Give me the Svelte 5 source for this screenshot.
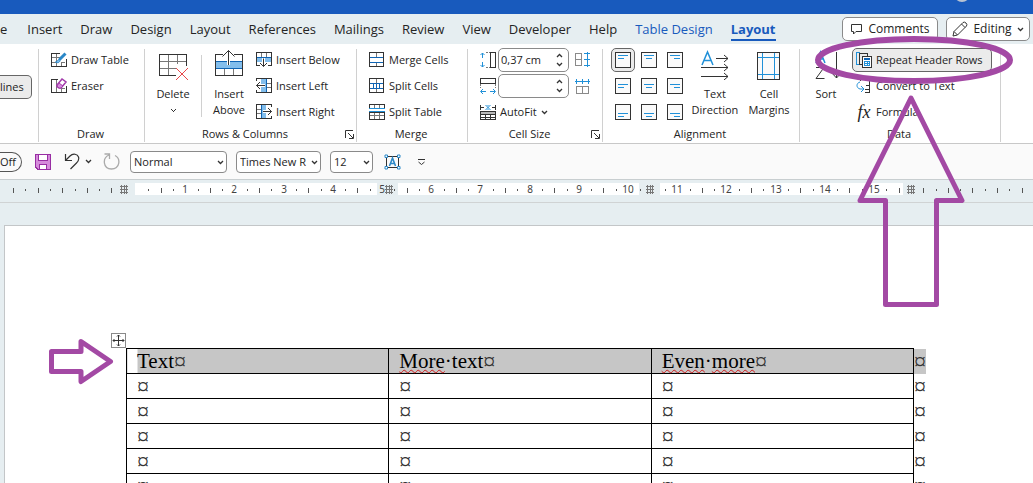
<script lang="ts">
	type Item = { label: string; icon: string };

	const tabs = [
		'Insert', 'Draw', 'Design', 'Layout', 'References', 'Mailings',
		'Review', 'View', 'Developer', 'Help'
	];

	const drawItems: Item[] = [
		{ label: 'Draw Table', icon: 'draw-table' },
		{ label: 'Eraser', icon: 'eraser' }
	];
	const insertItems: Item[] = [
		{ label: 'Insert Below', icon: 'insert-below' },
		{ label: 'Insert Left', icon: 'insert-left' },
		{ label: 'Insert Right', icon: 'insert-right' }
	];
	const mergeItems: Item[] = [
		{ label: 'Merge Cells', icon: 'merge' },
		{ label: 'Split Cells', icon: 'split-cells' },
		{ label: 'Split Table', icon: 'split-table' }
	];

	const vertical = ['top', 'middle', 'bottom'];
	const horizontal = ['left', 'center', 'right'];

	let rowHeight = $state('0,37 cm');
	let colWidth = $state('');
	let align = $state('top-left');
	let repeatHeader = $state(true);

	const headers = [['Text'], ['More', 'text'], ['Even', 'more']];
	const flagged = ['More', 'Even', 'more'];
	const bodyRows = [1, 2, 3, 4, 5];

	// ruler: four marks per centimetre, column markers replace some of them
	const ZERO = 136;
	const CM = 49.2;
	const stripes = [[135, 242], [398, 241], [660, 243]];
	const markers = [120, 385, 646, 907];
	const skipped = [-1, 0, 42, 63];
	const marks = Array.from({ length: 83 }, (_, i) => i - 10)
		.filter((i) => !skipped.includes(i))
		.map((i) => ({
			x: Math.round(ZERO + (i * CM) / 4),
			label: i > 0 && i <= 60 && i % 4 === 0 ? String(i / 4) : '',
			tall: i % 2 === 0
		}));
</script>

{#snippet chevron()}
	<svg class="chev" width="7" height="5" viewBox="0 0 7 5"><path d="M1 1l2.5 2.5L6 1" /></svg>
{/snippet}

{#snippet launcher()}
	<button class="launcher" aria-label="More options">
		<svg width="9" height="9" viewBox="0 0 9 9"><path d="M.5 8V.5H8M3 3l5 5M8.500 4v4.500H4" /></svg>
	</button>
{/snippet}

{#snippet icon(name: string)}
	<svg class="ico" width="16" height="16" viewBox="0 0 16 16" aria-hidden="true">
		{#if name === 'draw-table'}
			<path class="thin" d="M1 5.500h8M1 10.500h5M5.500 1v13M10.500 10v4M10 10.500h4" />
			<path d="M9 1.500H.5v13h14.500V7" />
			<path d="M14.500 1.500L8.500 7.500" stroke="#2b88c8" stroke-width="3" shape-rendering="auto" />
			<path d="M9 7.500c-2-1-2 2-4.500 2.500 2 1.500 5 .5 4.500-2.500z" fill="#83beec" stroke="#2b88c8" shape-rendering="auto" />
		{:else if name === 'eraser'}
			<path class="thin" d="M5.500 1v13M10.500 10v4M10 10.500h4" />
			<path d="M7 1.500H.5v13h14.500V8" />
			<path d="M6 7l5-6 4 3-5 6H8L6 8.500z" fill="#fff" stroke="#a33cab" stroke-width="1.500" shape-rendering="auto" />
			<path d="M8 5l4 3-2 2H8L6 8z" fill="#d58bdb" stroke="#a33cab" shape-rendering="auto" />
		{:else if name === 'insert-below'}
			<rect x="1" y="5" width="14" height="5" fill="#83beec" stroke="none" />
			<path class="thin" d="M5.500 1v4M10.500 1v4" />
			<path class="blue" d="M1 5.500h14" />
			<path d="M4 13.500H.5V.5h15v13H12" />
			<path d="M7.500 6v9" stroke="#fff" stroke-width="3" />
			<path d="M7.500 6.500v8M4 11l3.500 3.500L11 11" shape-rendering="auto" />
		{:else if name === 'insert-left'}
			<rect x="5" y="1" width="5" height="13" fill="#83beec" stroke="none" />
			<path class="thin" d="M11 5.500h4M11 9.500h4" />
			<path class="blue" d="M10.500 1v13" />
			<path d="M.5 3V.5h15v14H.5V12" />
			<path d="M1 7.500h8" stroke="#fff" stroke-width="3" />
			<path d="M.5 7.500H9M4 4L.5 7.500 4 11" shape-rendering="auto" />
		{:else if name === 'insert-right'}
			<rect x="5" y="1" width="5" height="13" fill="#83beec" stroke="none" />
			<path class="thin" d="M1 5.500h4M1 9.500h4" />
			<path class="blue" d="M5.500 1v13" />
			<path d="M15.500 3V.5H.5v14h15V12" />
			<path d="M7 7.500h8" stroke="#fff" stroke-width="3" />
			<path d="M7 7.500h8.500M12 4l3.500 3.500L12 11" shape-rendering="auto" />
		{:else if name === 'merge'}
			<path class="thin" d="M7.500 1v4M7.500 11v4" />
			<rect x=".5" y=".5" width="14" height="14" />
			<path class="blue" d="M1 5.500h13M1 10.500h13" />
		{:else if name === 'split-cells'}
			<path class="thin" d="M7.500 1v4M7.500 11v4" />
			<rect x=".5" y=".5" width="14" height="14" />
			<path class="blue" d="M1 5.500h13M1 10.500h13M4.500 5v5M7.500 5v5M10.500 5v5" />
		{:else if name === 'split-table'}
			<path class="thin" d="M5.500 1v3M10.500 1v3M5.500 9v6M10.500 9v6M1 11.500h14" />
			<path d="M.5 4V.5h15V4M.5 8.500h15v7H.5z" />
			<path class="blue light" d="M0 4.500h16M0 7.500h16" />
		{:else if name === 'row-height'}
			<path d="M10.500.5h5v15h-5z" />
			<path class="thin" stroke-dasharray="2 1" d="M6 .5h4M6 15.500h4" />
			<path class="blue light" shape-rendering="auto" d="M2.500 1v5M2.500 10v5M.5 3l2-2 2 2M.5 13l2 2 2-2" />
		{:else if name === 'col-width'}
			<path d="M.5.5h15v5H.5z" />
			<path class="thin" stroke-dasharray="2 1" d="M.5 6v4M15.500 6v4" />
			<path class="blue light" shape-rendering="auto" d="M1 13.500h5M10 13.500h5M3 11l-2.500 2.500L3 16M13 11l2.500 2.500L13 16" />
		{:else if name === 'dist-rows'}
			<path class="grey" d="M.5 1.500h6v12h-6zM0 7.500h7" />
			<path class="blue light" d="M12.500 0v15M9 1.500h6M9 7.500h6M9 13.500h6" />
		{:else if name === 'dist-cols'}
			<path class="grey" d="M1.500 8.500h12v7h-12zM7.500 8v8" />
			<path class="blue light" d="M0 3.500h15M1.500 1v5M7.500 1v5M13.500 1v5" />
		{:else if name === 'autofit'}
			<rect x=".5" y="7.500" width="15" height="3" fill="#b9b9b9" />
			<path d="M.5 10.500h15v5H.5zM1 13.500h14M5.500 11v4M10.500 11v4M.5 1v5M15.500 1v5M1 3.500h3M12 3.500h3" />
			<path class="blue light" shape-rendering="auto" d="M5.500 1l5 5M10.500 1l-5 5M8 1v1M8 5v1" />
		{:else if name === 'repeat'}
			<path class="blue light" d="M4 .5H.5v12H4" />
			<path d="M7 1.500H3.500v11H6M7 1.500h4.500V4" />
			<rect x="6.500" y="4.500" width="9" height="11" fill="#fff" />
			<path class="blue" d="M8 7h6" stroke-width="2" />
			<path class="blue light" d="M8.500 9.500h5v4h-5zM8 11.500h6M11 9v5" />
		{:else if name === 'convert'}
			<path d="M4.500 3V.5h9v14H9M10 7.500h4M9 11.500h5" />
			<path class="blue light" shape-rendering="auto" d="M4 4C0 5 0 10 4 11h3M5 8l3 3-3 3" />
		{/if}
	</svg>
{/snippet}

{#snippet commands(items: Item[])}
	<div class="stack">
		{#each items as item (item.label)}
			<button class="cmd">{@render icon(item.icon)}{item.label}</button>
		{/each}
	</div>
{/snippet}

{#snippet combo(label: string, value: string, size: string)}
	<div class="combo {size}">
		<select aria-label={label}><option>{value}</option></select>
		{@render chevron()}
	</div>
{/snippet}

{#snippet endMark()}<span class="mark">¤</span>{/snippet}

<div class="app">
	<header class="title"><span class="avatar"></span></header>

	<nav class="tabs">
		<button class="tab">e</button>
		{#each tabs as tab (tab)}
			<button class="tab">{tab}</button>
		{/each}
		<button class="tab context">Table Design</button>
		<button class="tab context active">Layout</button>
		<div class="actions">
			<button class="pill">
				<svg width="13" height="12" viewBox="0 0 13 12"><path d="M1.500 1.500h10v7H6l-2.500 2.500V8.500h-2z" /></svg>
				Comments
			</button>
			<button class="pill edit">
				<svg width="16" height="16" viewBox="0 0 16 16"><path d="M1 15l1-4.500L11 1.500q1.500-1 3 .5t.5 3L5.500 14zM9.500 3l3.500 3.500M2 10.500L5.500 14" /></svg>
				Editing
				{@render chevron()}
			</button>
		</div>
	</nav>

	<div class="ribbon">
		<section class="group cut">
			<button class="toggled lines">lines</button>
		</section>

		<section class="group">
			<div class="body">{@render commands(drawItems)}</div>
			<div class="caption"><span>Draw</span></div>
		</section>

		<section class="group">
			<div class="body rows-cols">
				<button class="big">
					<svg width="32" height="30" viewBox="0 0 32 30">
						<path class="thin" d="M11.500 5v20M20.500 5v9M3 11.500h26M3 18.500h17" />
						<path d="M19 25.500H2.500v-21h27V16" />
						<path d="M19 18l12 12M31 18L19 30" stroke="#e8484a" shape-rendering="auto" />
					</svg>
					<span>Delete</span>
					{@render chevron()}
				</button>
				<i class="rule"></i>
				<button class="big">
					<svg width="32" height="30" viewBox="0 0 32 30">
						<path class="thin" d="M11.500 19v6M20.500 19v6" />
						<rect x="3" y="12" width="26" height="7" fill="#83beec" stroke="none" />
						<path d="M10 4.500H2.500v21h27v-21H21" />
						<path class="blue" d="M3 11.500h26M3 18.500h26" />
						<path d="M15.500 1v14" stroke="#fff" stroke-width="3" />
						<path d="M15.500 15V.5M9.500 6.500l6-6 6 6" shape-rendering="auto" />
					</svg>
					<span>Insert<br />Above</span>
				</button>
				{@render commands(insertItems)}
			</div>
			<div class="caption"><span>Rows & Columns</span>{@render launcher()}</div>
		</section>

		<section class="group">
			<div class="body">{@render commands(mergeItems)}</div>
			<div class="caption"><span>Merge</span></div>
		</section>

		<section class="group">
			<div class="body">
				<div class="stack">
					<div class="size">
						{@render icon('row-height')}
						<div class="spin">
							<input type="text" aria-label="Height" bind:value={rowHeight} />
							<span class="steps">
								<button class="up" aria-label="Increase height">{@render chevron()}</button>
								<button aria-label="Decrease height">{@render chevron()}</button>
							</span>
						</div>
						{@render icon('dist-rows')}
					</div>
					<div class="size">
						{@render icon('col-width')}
						<div class="spin">
							<input type="text" aria-label="Width" bind:value={colWidth} />
							<span class="steps">
								<button class="up" aria-label="Increase width">{@render chevron()}</button>
								<button aria-label="Decrease width">{@render chevron()}</button>
							</span>
						</div>
						{@render icon('dist-cols')}
					</div>
					<button class="cmd">{@render icon('autofit')}AutoFit {@render chevron()}</button>
				</div>
			</div>
			<div class="caption"><span>Cell Size</span>{@render launcher()}</div>
		</section>

		<section class="group">
			<div class="body alignment">
				<div class="aligns">
					{#each vertical as v, r}
						{#each horizontal as h, c}
							<button
								class="align"
								class:on={align === `${v}-${h}`}
								aria-label={`Align ${v} ${h}`}
								onclick={() => (align = `${v}-${h}`)}
							>
								<svg class="ico" width="16" height="16" viewBox="0 0 16 16">
									<rect x=".5" y=".5" width="15" height="15" fill="#fafafa" />
									<path
										class="blue light"
										d={`M3 ${3.5 + r * 3}h10M${3 + c * 2} ${6.5 + r * 3}h6`}
									/>
								</svg>
							</button>
						{/each}
					{/each}
				</div>
				<button class="big">
					<svg width="32" height="30" viewBox="0 0 32 30">
						<path class="blue light" d="M3 15L8.500 2 14 15M5 10.500h7" shape-rendering="auto" stroke-width="1.500" />
						<path d="M17 8.500h12M2 17.500h27M2 26.500h27M25 5l4 3.500-4 3.500M25 14l4 3.500-4 3.500M25 23l4 3.500-4 3.500" shape-rendering="auto" />
					</svg>
					<span>Text<br />Direction</span>
				</button>
				<button class="big">
					<svg width="32" height="30" viewBox="0 0 32 30">
						<rect x="4.500" y="2.500" width="22" height="27" fill="#fafafa" />
						<path class="blue light" d="M9.500 3v26M21.500 3v26M5 7.500h21M5 24.500h21" />
					</svg>
					<span>Cell<br />Margins</span>
				</button>
			</div>
			<div class="caption"><span>Alignment</span></div>
		</section>

		<section class="group">
			<div class="body data">
				<button class="big">
					<svg width="32" height="30" viewBox="0 0 32 30">
						<path class="blue light" d="M6 13L10.500 2 15 13M7.500 9h6" shape-rendering="auto" stroke-width="1.500" />
						<path d="M6 17.500h8L6 28.500h8.500M26.500 2v26M21 22l5.500 6 5.500-6" shape-rendering="auto" />
					</svg>
					<span>Sort</span>
				</button>
				<div class="stack">
					<button
						class="cmd toggle"
						class:toggled={repeatHeader}
						aria-pressed={repeatHeader}
						onclick={() => (repeatHeader = !repeatHeader)}
					>
						{@render icon('repeat')}Repeat Header Rows
					</button>
					<button class="cmd toggle">{@render icon('convert')}Convert to Text</button>
					<button class="cmd toggle"><i class="fx">fx</i>Formula</button>
				</div>
			</div>
			<div class="caption"><span>Data</span></div>
		</section>
	</div>

	<div class="quick">
		<button class="off">Off</button>
		<button aria-label="Save">
			<svg width="16" height="16" viewBox="0 0 16 16">
				<path d="M.5.5h15v15H3L.5 13z" fill="#d58bdb" stroke="#982ea3" shape-rendering="crispEdges" />
				<path d="M3.500 1v5.500h9V1M4.500 15v-4.500h7V15" fill="#fff" stroke="#982ea3" shape-rendering="crispEdges" />
			</svg>
		</button>
		<button class="undo" aria-label="Undo">
			<svg width="16" height="17" viewBox="0 0 16 17"><path stroke-width="1.200" d="M1.500 1v6.500H8M1.500 7.500L6 3c3-3 7.500-2 8.500 1 1 3-.5 4.500-2 6L6.500 16" /></svg>
			{@render chevron()}
		</button>
		<button class="redo" aria-label="Redo">
			<svg width="17" height="17" viewBox="0 0 17 17"><path stroke-width="1.300" d="M1.500 1h5v5M6 2C-1 5 0 16 8.500 16S18 5.500 12 2.500" /></svg>
		</button>
		{@render combo('Style', 'Normal', 'wide')}
		{@render combo('Font', 'Times New R', 'mid')}
		{@render combo('Font size', '12', 'narrow')}
		<button class="textbox" aria-label="Text box">
			<svg width="17" height="16" viewBox="0 0 17 16">
				<path d="M2.500 2.500h12v11h-12z" />
				<g fill="#fff" stroke="#2b88c8">
					<path d="M1 1h2.500v2.500H1zM13.500 1H16v2.500h-2.500zM1 12.500h2.500V15H1zM13.500 12.500H16V15h-2.500z" />
				</g>
				<path d="M5.500 12l3-8 3 8M6.500 9.500h4" stroke="#2b88c8" stroke-width="1.600" />
			</svg>
		</button>
		<button class="custom" aria-label="Customize">
			<svg width="9" height="8" viewBox="0 0 9 8"><path d="M1 1.500h7M1.500 4l3 2.500 3-2.500" /></svg>
		</button>
	</div>

	<div class="ruler">
		<svg width="100%" height="22">
			{#each stripes as [x, w]}
				<rect {x} y="3" width={w} height="12" fill="#fff" />
			{/each}
			{#each marks as m}
				{#if m.label}
					<text x={m.x} y="13">{m.label}</text>
				{:else}
					<rect x={m.x} y={m.tall ? 8 : 9} width="1" height={m.tall ? 5 : 2} fill="#555" />
				{/if}
			{/each}
			{#each markers as x}
				<path
					class="hash"
					d={`M${x} 6.500h8M${x} 9.500h8M${x} 12.500h8M${x + 1.5} 5v9M${x + 4.5} 5v9M${x + 6.5} 5v9`}
				/>
			{/each}
		</svg>
	</div>

	<main class="canvas">
		<article class="sheet">
			<button class="handle" aria-label="Move table">
				<svg width="13" height="13" viewBox="0 0 13 13">
					<path d="M6.500 1v11M1 6.500h11M5 2.500l1.500-1.500L8 2.500M5 10.500L6.500 12 8 10.500M2.500 5L1 6.500 2.500 8M10.500 5L12 6.500 10.500 8" />
				</svg>
			</button>
			<table>
				<thead>
					<tr>
						{#each headers as words}
							<th>
								<span class="cell">{#each words as word, i}{i ? '·' : ''}<span class:flag={flagged.includes(word)}>{word}</span>{/each}{@render endMark()}</span>
							</th>
						{/each}
						<td class="end">{@render endMark()}</td>
					</tr>
				</thead>
				<tbody>
					{#each bodyRows as row (row)}
						<tr>
							{#each headers as _}
								<td>{@render endMark()}</td>
							{/each}
							<td class="end">{@render endMark()}</td>
						</tr>
					{/each}
				</tbody>
			</table>
		</article>
	</main>

	<svg class="notes" aria-hidden="true">
		<ellipse cx="914" cy="60" rx="96" ry="21" stroke-width="6" />
		<path d="M911 98L962 200.500H936.500V304.500H885.500V200.500H860z" />
		<path d="M51.500 351.500H81V341.500L110.500 361.500 81 381.500V371.500H51.500z" />
	</svg>
</div>

<style>
	:global(body) {
		margin: 0;
	}

	.app {
		position: relative;
		display: flex;
		flex-direction: column;
		height: 100vh;
		overflow: hidden;
		background: #e6eef1;
		color: #242424;
		font: 11px/16px 'Open Sans', 'Noto Sans', sans-serif;
	}

	button {
		padding: 0;
		border: 0;
		background: none;
		color: inherit;
		font: inherit;
		white-space: nowrap;
	}

	svg {
		flex: none;
		fill: none;
		stroke: #333;
	}
	.ico,
	.big svg {
		shape-rendering: crispEdges;
	}
	.thin { stroke: #777; }
	.grey { stroke: #8a8a8a; }
	.blue { stroke: #0f64b4; }
	.light { stroke: #2090d8; }
	.chev { stroke-width: 1.3; }

	/* title bar and tabs */
	.title {
		display: flex;
		justify-content: flex-end;
		flex: none;
		height: 14px;
		padding-right: 63px;
		overflow: hidden;
		background: #185abd;
	}
	.avatar {
		width: 16px;
		height: 16px;
		margin-top: -14px;
		border-radius: 50%;
		background: #b9c3d2;
	}

	.tabs {
		display: flex;
		flex: none;
		align-items: center;
		gap: 18px;
		height: 30px;
		padding-right: 3px;
		font-size: 13px;
	}
	.tab {
		height: 24px;
		border-bottom: 2px solid transparent;
		border-top: 2px solid transparent;
	}
	.tab:first-child { margin-right: 2px; }
	.tab.context { color: #185abd; }
	.tab.active {
		border-bottom-color: #185abd;
		font-weight: 700;
	}
	.actions {
		display: flex;
		gap: 8px;
		margin-left: auto;
		font-size: 12px;
	}
	.pill {
		display: flex;
		align-items: center;
		justify-content: center;
		gap: 5px;
		box-sizing: border-box;
		width: 96px;
		height: 24px;
		border: 1px solid #8a8a8a;
		border-radius: 5px;
		background: #fff;
	}
	.pill.edit { width: 84px; }

	/* ribbon */
	.ribbon {
		display: grid;
		flex: none;
		grid-template-columns: 39px 106px 212px 111px 135px 197px 201px;
		height: 99px;
		border-bottom: 1px solid #c8c8c8;
		background: #fff;
	}
	.group {
		display: flex;
		flex-direction: column;
		margin: 5px 0;
		border-right: 1px solid #d0d0d0;
	}
	.body {
		display: flex;
		height: 77px;
		padding-left: 12px;
	}
	.body.rows-cols { padding-left: 1px; }
	.body.alignment,
	.body.data {
		padding-left: 0;
	}
	.caption {
		display: flex;
		align-items: center;
		height: 16px;
		padding-right: 2px;
	}
	.caption span {
		flex: 1;
		text-align: center;
	}
	.stack {
		display: flex;
		flex-direction: column;
		margin-top: -1px;
	}
	.cmd {
		display: flex;
		align-items: center;
		gap: 4px;
		height: 24px;
		margin-bottom: 2px;
	}
	.toggle {
		padding: 0 8px 0 3px;
		border: 1px solid transparent;
		height: 24px;
		box-sizing: border-box;
	}
	.toggled {
		border: 1px solid #666;
		border-radius: 5px;
		background: #ebebeb;
	}
	.cut {
		align-items: flex-start;
		justify-content: center;
	}
	.lines {
		box-sizing: border-box;
		height: 24px;
		margin-bottom: 18px;
		padding-right: 7px;
		border-left: 0;
		border-radius: 0 5px 5px 0;
	}

	.big {
		display: flex;
		flex: none;
		flex-direction: column;
		align-items: center;
		width: 54px;
		padding-top: 1px;
	}
	.data .big { width: 52px; }
	.big svg:first-child { margin-bottom: 6px; }
	.big .chev { margin-top: 6px; }
	.rule {
		width: 1px;
		height: 62px;
		margin: 6px 0 0 1px;
		background: #d0d0d0;
	}

	.launcher {
		display: flex;
		flex: none;
	}

	.size {
		display: flex;
		align-items: center;
		gap: 2px;
		height: 24px;
		margin-bottom: 2px;
	}
	.size .ico:last-child { margin-left: 4px; }
	.spin {
		display: flex;
		box-sizing: border-box;
		width: 71px;
		height: 24px;
		padding: 0 5px 0 2px;
		border: 1px solid #8a8a8a;
		border-radius: 5px;
		background: #fff;
	}
	.spin input {
		flex: 1;
		min-width: 0;
		padding: 0;
		border: 0;
		outline: 0;
		background: none;
		color: inherit;
		font: inherit;
	}
	.steps {
		display: flex;
		flex-direction: column;
		justify-content: space-evenly;
	}
	.steps button { display: flex; }
	.steps .up { transform: rotate(180deg); }

	.aligns {
		display: grid;
		grid-template-columns: repeat(3, 26px);
		grid-template-rows: repeat(3, 26px);
		margin: -2px 0 0 7px;
	}
	.align {
		display: flex;
		align-items: center;
		justify-content: center;
		margin: 1px;
		border: 1px solid transparent;
		border-radius: 5px;
	}
	.align.on {
		border-color: #666;
		background: #ebebeb;
	}

	.fx {
		width: 16px;
		font: italic 18px/20px 'Liberation Serif', serif;
	}

	/* quick access bar */
	.quick {
		display: flex;
		flex: none;
		align-items: center;
		height: 35px;
		border-bottom: 1px solid #c8ced0;
		background: #fafafa;
	}
	.quick button { display: flex; align-items: center; }
	.quick .off {
		width: 22px;
		height: 20px;
		margin-right: 13px;
		box-sizing: border-box;
		border: 1px solid #555;
		border-left: 0;
		border-radius: 0 10px 10px 0;
	}
	.quick .undo { gap: 5px; margin: 0 11px 0 13px; }
	.quick .redo { margin-right: 10px; }
	.redo svg { stroke: #aaa; }
	.combo {
		position: relative;
		margin-right: 9px;
	}
	.combo select {
		box-sizing: border-box;
		width: 100%;
		height: 22px;
		padding: 0 11px 0 3px;
		border: 1px solid #8a8a8a;
		border-radius: 4px;
		background: #fff;
		color: inherit;
		font: inherit;
		appearance: none;
	}
	.combo .chev {
		position: absolute;
		top: 9px;
		right: 3px;
		pointer-events: none;
	}
	.wide { width: 97px; }
	.mid { width: 85px; }
	.narrow { width: 43px; }
	.quick .textbox { margin: 0 16px 0 2px; }

	.ruler {
		flex: none;
		height: 22px;
		border-bottom: 1px solid #d0d3d4;
	}
	.ruler svg { display: block; }
	.ruler rect { stroke: none; }
	.ruler text {
		fill: #444;
		stroke: none;
		font: 10px 'Noto Sans', sans-serif;
		text-anchor: middle;
	}
	.hash {
		stroke: #777;
		shape-rendering: crispEdges;
	}

	/* document */
	.canvas {
		flex: 1;
		min-height: 0;
		padding: 22px 0 0 4px;
	}
	.sheet {
		padding: 107px 0 0 106px;
		border: solid #c3c6c8;
		border-width: 1px 0 0 1px;
		background: #fff;
	}
	.handle {
		display: flex;
		border: 1px solid #8a8a8a;
	}
	table {
		width: 800px;
		margin-left: 15px;
		border-collapse: collapse;
		table-layout: fixed;
		color: #000;
		font: 21px/24px 'Liberation Serif', serif;
	}
	th,
	td {
		height: 24px;
		padding: 0 0 0 10px;
		border: 1px solid #000;
		font-weight: 400;
		text-align: left;
	}
	th { background: #c6c6c6; }
	/* the selection starts at the text of the first cell */
	th:first-child {
		background: linear-gradient(90deg, #fff 10px, #c6c6c6 10px);
	}
	.end {
		width: 11px;
		padding: 0;
		border: 0;
	}
	thead .end { background: #c6c6c6; }
	.cell,
	.mark { display: inline-block; height: 24px; vertical-align: top; }
	.mark {
		color: #333;
		font-size: 24px;
		line-height: 24px;
	}
	.flag {
		text-decoration: underline wavy #d01818 1px;
		text-underline-offset: 1px;
		text-decoration-skip-ink: none;
	}

	/* hand-drawn pointers laid over the window */
	.notes {
		position: absolute;
		inset: 0;
		width: 100%;
		height: 100%;
		stroke: #a349a4;
		stroke-width: 5;
		stroke-linejoin: round;
		pointer-events: none;
	}
</style>
